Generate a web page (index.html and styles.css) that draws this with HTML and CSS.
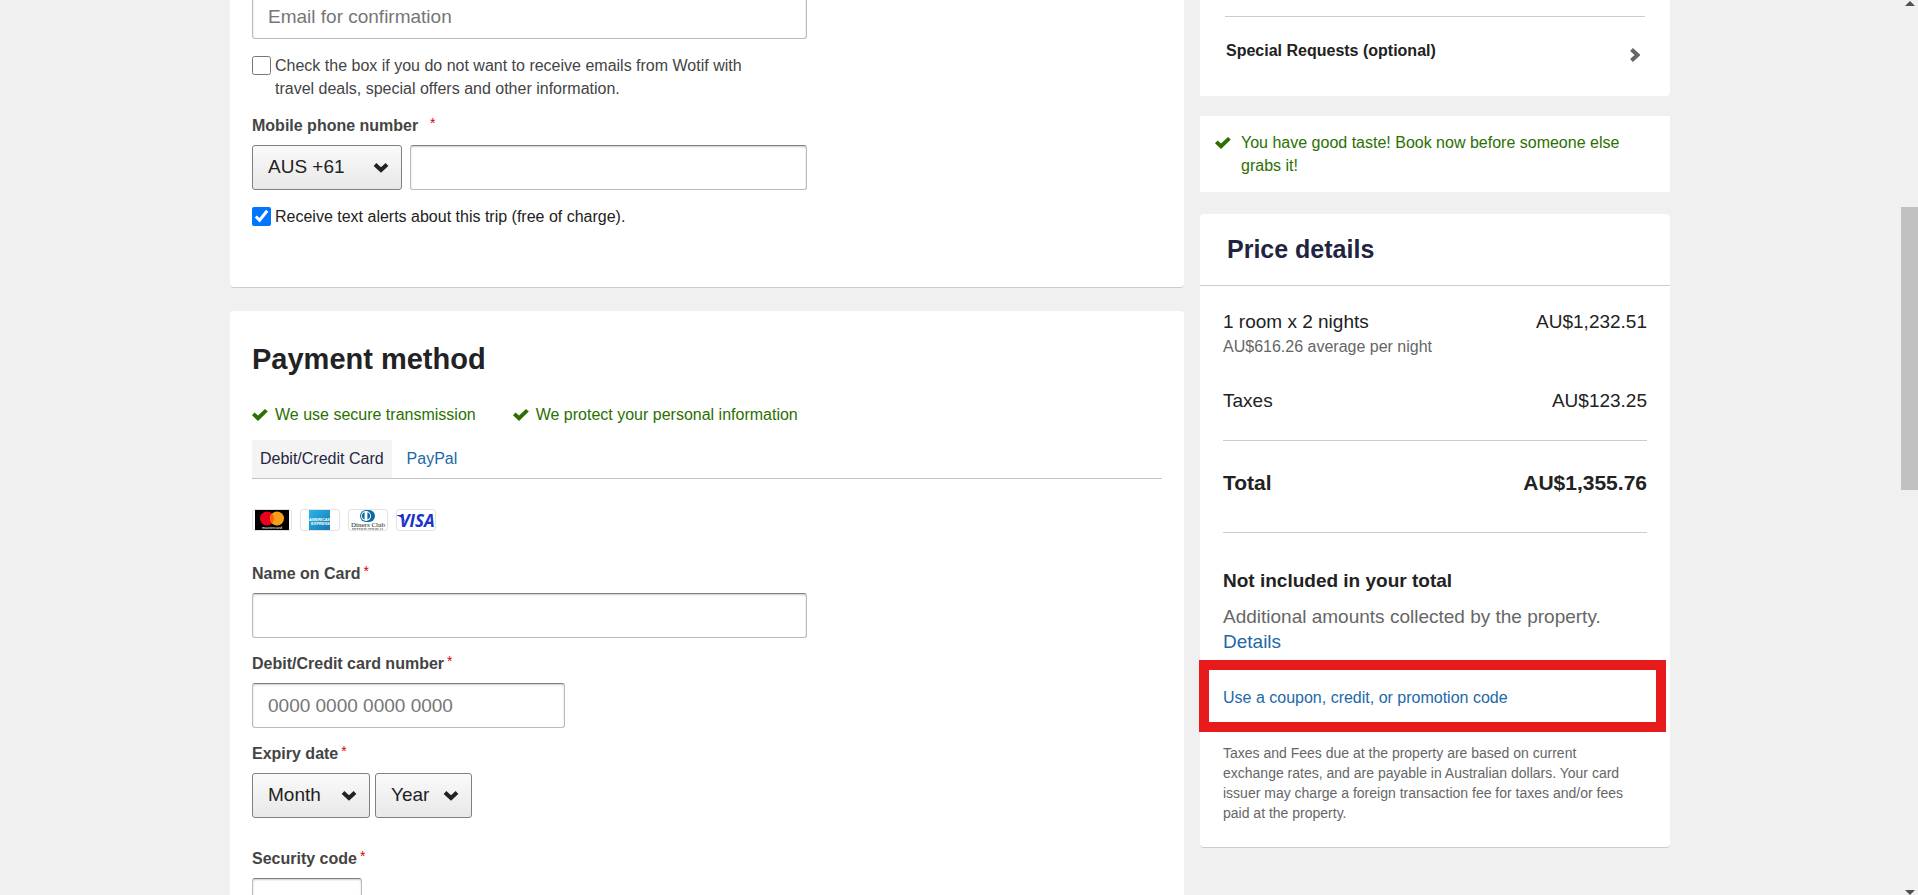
FILE: index.html
```html
<!DOCTYPE html>
<html lang="en">
<head>
    <meta charset="utf-8">
    <title>Wotif - Payment</title>
    <link rel="stylesheet" href="styles.css">
</head>
<body>
    <!-- Shared icons -->
    <svg class="sprite" aria-hidden="true">
        <symbol id="check" viewBox="0 0 16 12">
            <path d="M0 6.2 L2.6 3.6 L6 6.6 L13 0 L15.8 2.4 L6 12 Z"/>
        </symbol>
    </svg>

    <div class="window">
    <main class="page">
        <form class="booking">
            <!-- Contact details -->
            <section class="card contact">
                <input class="field email" type="email" id="email" aria-label="Email" placeholder="Email for confirmation">
                <div class="tick">
                    <input type="checkbox" id="optout">
                    <label class="muted" for="optout">Check the box if you do not want to receive emails from Wotif with<br>travel deals, special offers and other information.</label>
                </div>
                <label class="label" for="phone">Mobile phone number &nbsp;<span class="required">*</span></label>
                <div class="phone-row">
                    <select class="dropdown country" aria-label="Country code"><option>AUS +61</option></select>
                    <input class="field" type="tel" id="phone">
                </div>
                <div class="tick">
                    <input type="checkbox" id="alerts" checked>
                    <label for="alerts">Receive text alerts about this trip (free of charge).</label>
                </div>
            </section>

            <!-- Payment method -->
            <section class="card payment">
                <h2>Payment method</h2>
                <ul class="promises">
                    <li><svg class="check"><use href="#check"/></svg>We use secure transmission</li>
                    <li><svg class="check"><use href="#check"/></svg>We protect your personal information</li>
                </ul>
                <nav class="tabs">
                    <a class="tab active" href="#card">Debit/Credit Card</a>
                    <a class="tab" href="#paypal">PayPal</a>
                </nav>

                <div class="brands">
                    <svg class="brand" viewBox="0 0 38 20" role="img" aria-label="Mastercard">
                        <rect x="2" width="34" height="20" fill="#000"/>
                        <circle cx="14" cy="8.5" r="7" fill="#eb001b"/>
                        <circle cx="24" cy="8.5" r="7" fill="#f79e1b"/>
                        <path d="M19 3.6 A7 7 0 0 1 19 13.4 A7 7 0 0 1 19 3.6" fill="#ff5f00"/>
                        <text x="19" y="19" font-size="4" text-anchor="middle" fill="#fff">mastercard</text>
                    </svg>
                    <svg class="brand" viewBox="0 0 38 20" role="img" aria-label="American Express">
                        <defs>
                            <linearGradient id="amex" x1="0" y1="0" x2="1" y2="1">
                                <stop offset="0" stop-color="#2bb4ea"/>
                                <stop offset="1" stop-color="#1778b0"/>
                            </linearGradient>
                        </defs>
                        <rect x="8" width="21" height="20" fill="url(#amex)"/>
                        <text x="8" y="11" font-size="4" font-weight="bold" fill="#fff">AMERICAN</text>
                        <text x="29" y="15" font-size="4" font-weight="bold" text-anchor="end" fill="#fff">EXPRESS</text>
                    </svg>
                    <svg class="brand" viewBox="0 0 38 20" role="img" aria-label="Diners Club International">
                        <path d="M17 0 H20 A6 6 0 0 1 20 12 H17 A6 6 0 0 1 17 0" fill="#0a69a5"/>
                        <circle cx="17" cy="6" r="5" fill="#fff"/>
                        <path d="M15.6 2.2 A4 4 0 0 0 15.6 9.8 Z M18.4 2.2 A4 4 0 0 1 18.4 9.8 Z" fill="#0a69a5"/>
                        <text class="serif" x="19" y="17" font-size="7" text-anchor="middle" fill="#222">Diners Club</text>
                        <text class="serif" x="19" y="21" font-size="4" text-anchor="middle" fill="#222">INTERNATIONAL</text>
                    </svg>
                    <svg class="brand" viewBox="0 0 38 20" role="img" aria-label="Visa">
                        <text class="visa" x="20" y="17" font-size="17" text-anchor="middle" fill="#1a34cb">VISA</text>
                        <path d="M0 5 H6 L8 12 Q5 7 0 5.6 Z" fill="#1a34cb"/>
                    </svg>
                </div>

                <div class="group">
                    <label class="label" for="name">Name on Card<span class="required">*</span></label>
                    <input class="field wide" type="text" id="name">
                </div>
                <div class="group">
                    <label class="label" for="number">Debit/Credit card number<span class="required">*</span></label>
                    <input class="field number" type="text" id="number" placeholder="0000 0000 0000 0000">
                </div>
                <div class="group expiry">
                    <label class="label" for="month">Expiry date<span class="required">*</span></label>
                    <div class="expiry-row">
                        <select class="dropdown month" id="month"><option>Month</option></select>
                        <select class="dropdown year" aria-label="Expiry year"><option>Year</option></select>
                    </div>
                </div>
                <div class="group">
                    <label class="label" for="code">Security code<span class="required">*</span></label>
                    <input class="field code" type="text" id="code">
                </div>
            </section>
        </form>

        <aside class="summary">
            <!-- Special requests -->
            <section class="card requests">
                <a class="requests-link" href="#requests">
                    <span>Special Requests (optional)</span>
                    <svg class="chevron" viewBox="0 0 10 14"><path d="M1.5 1.5 L7.5 7 L1.5 12.5"/></svg>
                </a>
            </section>

            <p class="taste"><svg class="check"><use href="#check"/></svg><span>You have good taste! Book now before someone else grabs it!</span></p>

            <!-- Price details -->
            <section class="card price">
                <h3>Price details</h3>
                <div class="price-body">
                    <table class="costs">
                        <tr class="room">
                            <th>1 room x 2 nights<small>AU$616.26 average per night</small></th>
                            <td>AU$1,232.51</td>
                        </tr>
                        <tr class="taxes">
                            <th>Taxes</th>
                            <td>AU$123.25</td>
                        </tr>
                        <tr class="total">
                            <th>Total</th>
                            <td>AU$1,355.76</td>
                        </tr>
                    </table>
                    <h4>Not included in your total</h4>
                    <p class="extra">Additional amounts collected by the property. <a href="#details">Details</a></p>
                    <p class="coupon"><a href="#coupon">Use a coupon, credit, or promotion code</a></p>
                    <p class="note">Taxes and Fees due at the property are based on current exchange rates, and are payable in Australian dollars. Your card issuer may charge a foreign transaction fee for taxes and/or fees paid at the property.</p>
                </div>
            </section>
        </aside>
    </main>

    <!-- Scroll bar -->
    <div class="scrollbar" aria-hidden="true">
        <span class="arrow up"></span>
        <div class="track"><div class="thumb"></div></div>
        <span class="arrow down"></span>
    </div>
    </div>
</body>
</html>
```
FILE: styles.css
```css
/* Global styles */
* {
    box-sizing: border-box;
}

body {
    margin: 0;
    font-family: "Liberation Sans", Arial, sans-serif;
    font-size: 16px;
    line-height: 23px;
    color: #222;
    background-color: #f0f0f0;
}

h2, h3, h4, p, ul {
    margin: 0;
    padding: 0;
}

a {
    color: #2268a8;
    text-decoration: none;
}

.sprite {
    display: none;
}

.window {
    display: flex;
    height: 100vh;
    overflow: hidden;
}

.page {
    flex: 1;
    display: grid;
    grid-template-columns: 1fr 470px;
    gap: 16px;
    align-items: start;
    max-width: 1440px;
    margin: 0 auto;
}

/* Cards */
.card {
    background-color: #fff;
    border-radius: 4px;
    border-bottom: 1px solid #ccc;
}

.contact {
    padding: 0 22px 45px;
    border-top-left-radius: 0;
    border-top-right-radius: 0;
    margin-bottom: 23px;
}

.payment {
    padding: 28px 22px;
}

/* Form fields */
.field, .dropdown {
    height: 45px;
    padding: 0 15px;
    font-family: inherit;
    font-size: 19px;
    color: #222;
    border: 1px solid #bbb;
    border-radius: 3px;
}

.field {
    display: block;
    border-top-color: #808080;
    background-color: #fff;
    box-shadow: inset 0 1px 2px rgba(0, 0, 0, 0.2);
}

.field::placeholder {
    color: #767676;
}

.dropdown {
    appearance: none;
    padding-bottom: 2px;
    border-color: #808080;
    background: url("data:image/svg+xml,%3Csvg xmlns='http://www.w3.org/2000/svg' width='16' height='11'%3E%3Cpath d='M2 2.5 L8 8 L14 2.5' fill='none' stroke='%23222' stroke-width='4'/%3E%3C/svg%3E") no-repeat right 12px center,
        linear-gradient(#fafafa, #e8e8e8);
}

.email, .wide, .phone-row {
    width: 100%;
    max-width: 555px;
}

.email {
    margin-top: -6px; /* scrolled under the top edge */
    margin-bottom: 15px;
}

.number {
    width: 313px;
}

.code {
    width: 110px;
}

.country {
    width: 150px;
}

.month {
    width: 118px;
}

.year {
    width: 97px;
}

.phone-row {
    display: flex;
    gap: 8px;
    margin-bottom: 15px;
}

.phone-row .field {
    flex: 1;
}

.expiry-row {
    display: flex;
    gap: 5px;
}

.tick {
    display: flex;
    gap: 4px;
    margin-bottom: 14px;
}

.tick input {
    width: 19px;
    height: 19px;
    margin: 2px 0 0;
}

.muted {
    color: #444;
}

.label {
    display: block;
    margin-bottom: 8px;
    font-weight: bold;
    color: #444;
}

.required {
    margin-left: 3px;
    font-size: 14px;
    font-weight: normal;
    line-height: 16px;
    vertical-align: 3px;
    color: #d00;
}

.group {
    margin-bottom: 14px;
}

.expiry {
    margin-bottom: 29px;
}

/* Payment header */
.payment h2 {
    margin-bottom: 24px;
    font-size: 29px;
    line-height: 40px;
}

.promises {
    display: flex;
    gap: 37px;
    list-style: none;
    color: #2b7000;
}

.promises li {
    display: flex;
    align-items: center;
    gap: 7px;
}

.check {
    width: 16px;
    height: 12px;
    flex: none;
    fill: #2b7000;
}

.tabs {
    display: flex;
    gap: 7px;
    margin: 14px 0 30px;
    border-bottom: 1px solid #c4c4c4;
}

.tab {
    padding: 7px 8px 8px;
}

.tab.active {
    color: #1f2541;
    background-color: #f4f4f4;
}

.brands {
    display: flex;
    gap: 8px;
    margin-bottom: 31px;
}

.brand {
    width: 40px;
    height: 22px;
    border: 1px solid #e2e2e2;
    border-radius: 3px;
}

.serif {
    font-family: "Liberation Serif", serif;
}

.visa {
    font-family: "Open Sans", sans-serif;
    font-weight: bold;
    font-style: italic;
}

/* Right column */
.requests {
    padding: 16px 25px 0;
    border-bottom: 0;
    border-radius: 0 0 4px 0;
}

.requests-link {
    display: flex;
    justify-content: space-between;
    height: 80px;
    padding: 22px 5px 0 1px;
    border-top: 1px solid #ccc;
    font-weight: bold;
    color: #222;
}

.chevron {
    width: 10px;
    height: 14px;
    margin-top: 9px;
    fill: none;
    stroke: #666;
    stroke-width: 4;
}

.taste {
    display: flex;
    gap: 10px;
    margin: 20px 0 22px;
    padding: 15px;
    background-color: #fff;
    color: #2b7000;
}

.taste .check {
    margin-top: 6px;
}

.price h3 {
    padding: 20px 27px 21px;
    font-size: 25px;
    line-height: 30px;
    color: #1f2541;
    border-bottom: 1px solid #ccc;
}

.price-body {
    padding: 23px 23px 24px;
}

.costs {
    width: 100%;
    border-collapse: collapse;
    font-size: 19px;
    line-height: 25px;
}

.costs th, .costs td {
    padding: 0;
    text-align: left;
    vertical-align: top;
    font-weight: normal;
}

.costs td {
    text-align: right;
}

.costs small {
    display: block;
    font-size: 16px;
    color: #666;
}

.costs .room > * {
    padding-bottom: 29px;
}

.costs .taxes > * {
    padding-bottom: 27px;
    border-bottom: 1px solid #ccc;
}

.costs .total > * {
    padding: 29px 0 37px;
    font-size: 21px;
    font-weight: bold;
    border-bottom: 1px solid #ccc;
}

.price h4 {
    margin: 35px 0 11px;
    font-size: 19px;
    line-height: 25px;
}

.extra {
    font-size: 19px;
    line-height: 25px;
    color: #666;
}

.coupon {
    position: relative;
    padding: 32px 0 34px;
}

/* Red frame round the coupon link */
.coupon::after {
    content: "";
    position: absolute;
    top: 6px;
    bottom: 11px;
    left: -24px;
    right: -19px;
    border: 10px solid #e71b1b;
    pointer-events: none;
}

.note {
    padding-right: 10px;
    font-size: 14px;
    line-height: 20px;
    color: #666;
}

/* Scroll bar */
.scrollbar {
    display: flex;
    flex-direction: column;
    align-items: center;
    width: 17px;
    flex: none;
    margin-left: 1px;
}

.track {
    flex: 1;
    width: 100%;
    padding-top: 201px;
}

.thumb {
    height: 283px;
    background-color: #c1c1c1;
}

.arrow {
    border: 5px solid transparent;
}

.up {
    border-top-width: 1px;
    border-bottom-color: #505050;
}

.down {
    border-bottom-width: 0;
    border-top-color: #505050;
}
```
